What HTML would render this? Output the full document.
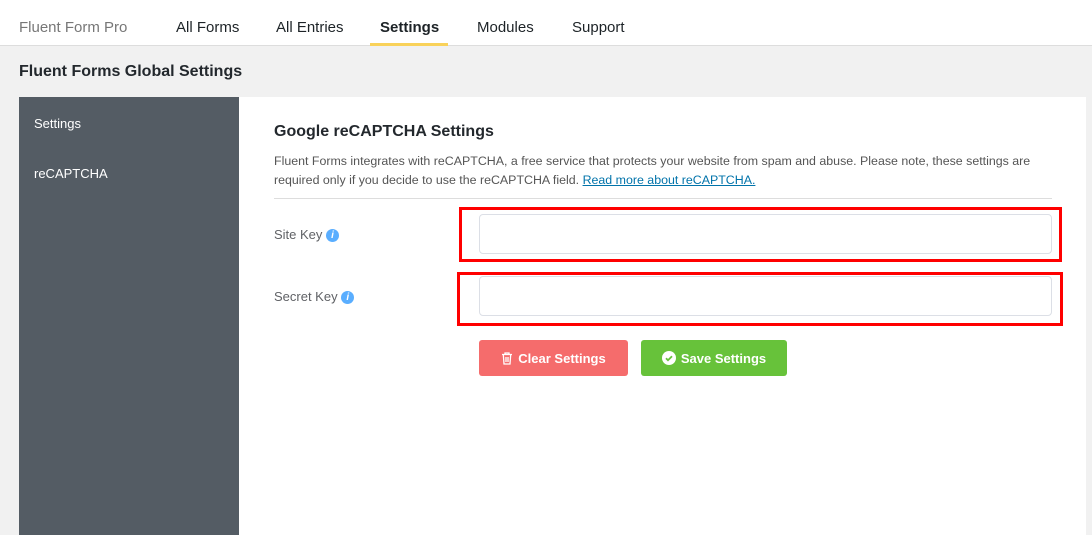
<!DOCTYPE html>
<html><head><style>
*{margin:0;padding:0;box-sizing:border-box}
body{width:1092px;height:535px;overflow:hidden;background:#f1f1f1;font-family:"Liberation Sans",sans-serif;position:relative}
.nav{position:absolute;left:0;top:0;width:1092px;height:46px;background:#fff;border-bottom:1px solid #ddd}
.nav span{position:absolute;top:19px;font-size:15px;color:#1d2327}
.a{position:absolute}
.i{display:inline-block;width:13px;height:13px;border-radius:50%;background:#5aaeff;color:#fff;font-size:10px;font-style:italic;font-weight:bold;text-align:center;line-height:13px;vertical-align:1px}
.btn{position:absolute;top:340px;height:36px;border-radius:3px;color:#fff;font-size:13px;font-weight:bold;display:flex;align-items:center;justify-content:center;gap:5px}
</style></head><body>
<div class="nav">
<span style="left:19px;color:#777">Fluent Form Pro</span>
<span style="left:176px">All Forms</span>
<span style="left:276px">All Entries</span>
<span style="left:380px;font-weight:bold">Settings</span>
<span style="left:477px">Modules</span>
<span style="left:572px">Support</span>
<div class="a" style="left:370px;top:43px;width:78px;height:3px;background:#f9d25a"></div>
</div>
<div class="a" style="left:19px;top:63px;font-size:16px;font-weight:bold;color:#23282d">Fluent Forms Global Settings</div>
<div class="a" style="left:19px;top:97px;width:220px;height:438px;background:#545c64"></div>
<div class="a" style="left:34px;top:116px;font-size:13px;color:#fff">Settings</div>
<div class="a" style="left:34px;top:166px;font-size:13px;color:#fff">reCAPTCHA</div>
<div class="a" style="left:239px;top:97px;width:847px;height:438px;background:#fff"></div>
<div class="a" style="left:274px;top:123px;font-size:16px;font-weight:bold;color:#23282d">Google reCAPTCHA Settings</div>
<div class="a" style="left:274px;top:152px;width:790px;font-size:12.4px;line-height:19px;color:#555">Fluent Forms integrates with reCAPTCHA, a free service that protects your website from spam and abuse. Please note, these settings are required only if you decide to use the reCAPTCHA field. <span style="color:#0073aa;text-decoration:underline">Read more about reCAPTCHA.</span></div>
<div class="a" style="left:274px;top:198px;width:778px;height:1px;background:#ddd"></div>
<div class="a" style="left:274px;top:227px;font-size:13px;color:#606266">Site Key <span class="i">i</span></div>
<div class="a" style="left:274px;top:289px;font-size:13px;color:#606266">Secret Key <span class="i">i</span></div>
<div class="a" style="left:459px;top:207px;width:603px;height:55px;border:3px solid #f00"></div>
<div class="a" style="left:457px;top:272px;width:606px;height:54px;border:3px solid #f00"></div>
<div class="a" style="left:479px;top:214px;width:573px;height:40px;border:1px solid #dcdfe6;border-radius:4px"></div>
<div class="a" style="left:479px;top:276px;width:573px;height:40px;border:1px solid #dcdfe6;border-radius:4px"></div>
<div class="btn" style="left:479px;width:149px;background:#f56c6c"><svg width="12" height="13" viewBox="0 0 12 13"><path d="M1 2.5h10M4 2.5V1h4v1.5M2.3 2.5l.7 9.5h6l.7-9.5M5 5v5M7 5v5" stroke="#fff" stroke-width="1.3" fill="none"/></svg>Clear Settings</div>
<div class="btn" style="left:641px;width:146px;background:#67c23a"><svg width="14" height="14" viewBox="0 0 14 14"><circle cx="7" cy="7" r="7" fill="#fff"/><path d="M4 7.2l2 2 4-4" stroke="#67c23a" stroke-width="1.8" fill="none"/></svg>Save Settings</div>
</body></html>
